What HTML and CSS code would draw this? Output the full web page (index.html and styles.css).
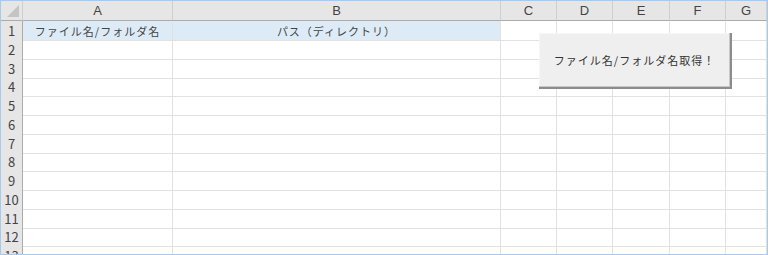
FILE: index.html
```html
<!DOCTYPE html>
<html lang="ja">
<head>
    <meta charset="UTF-8">
    <title>ファイル名/フォルダ名取得</title>
    <link rel="stylesheet" href="styles.css">
</head>
<body>
    <div class="sheet">
        <div class="grid">
            <div class="row head-row">
                <div class="corner"><span class="corner-mark"></span></div>
                <div class="col-head">A</div><div class="col-head">B</div><div class="col-head">C</div>
                <div class="col-head">D</div><div class="col-head">E</div><div class="col-head">F</div><div class="col-head">G</div>
            </div>
            <div class="row">
                <div class="row-head">1</div>
                <div class="cell title">ファイル名/フォルダ名</div><div class="cell title">パス（ディレクトリ）</div>
                <div class="cell"></div><div class="cell"></div><div class="cell"></div><div class="cell"></div><div class="cell"></div>
            </div>
            <div class="row"><div class="row-head">2</div><div class="cell"></div><div class="cell"></div><div class="cell"></div><div class="cell"></div><div class="cell"></div><div class="cell"></div><div class="cell"></div></div>
            <div class="row"><div class="row-head">3</div><div class="cell"></div><div class="cell"></div><div class="cell"></div><div class="cell"></div><div class="cell"></div><div class="cell"></div><div class="cell"></div></div>
            <div class="row"><div class="row-head">4</div><div class="cell"></div><div class="cell"></div><div class="cell"></div><div class="cell"></div><div class="cell"></div><div class="cell"></div><div class="cell"></div></div>
            <div class="row"><div class="row-head">5</div><div class="cell"></div><div class="cell"></div><div class="cell"></div><div class="cell"></div><div class="cell"></div><div class="cell"></div><div class="cell"></div></div>
            <div class="row"><div class="row-head">6</div><div class="cell"></div><div class="cell"></div><div class="cell"></div><div class="cell"></div><div class="cell"></div><div class="cell"></div><div class="cell"></div></div>
            <div class="row"><div class="row-head">7</div><div class="cell"></div><div class="cell"></div><div class="cell"></div><div class="cell"></div><div class="cell"></div><div class="cell"></div><div class="cell"></div></div>
            <div class="row"><div class="row-head">8</div><div class="cell"></div><div class="cell"></div><div class="cell"></div><div class="cell"></div><div class="cell"></div><div class="cell"></div><div class="cell"></div></div>
            <div class="row"><div class="row-head">9</div><div class="cell"></div><div class="cell"></div><div class="cell"></div><div class="cell"></div><div class="cell"></div><div class="cell"></div><div class="cell"></div></div>
            <div class="row"><div class="row-head">10</div><div class="cell"></div><div class="cell"></div><div class="cell"></div><div class="cell"></div><div class="cell"></div><div class="cell"></div><div class="cell"></div></div>
            <div class="row"><div class="row-head">11</div><div class="cell"></div><div class="cell"></div><div class="cell"></div><div class="cell"></div><div class="cell"></div><div class="cell"></div><div class="cell"></div></div>
            <div class="row"><div class="row-head">12</div><div class="cell"></div><div class="cell"></div><div class="cell"></div><div class="cell"></div><div class="cell"></div><div class="cell"></div><div class="cell"></div></div>
            <div class="row"><div class="row-head">13</div><div class="cell"></div><div class="cell"></div><div class="cell"></div><div class="cell"></div><div class="cell"></div><div class="cell"></div><div class="cell"></div></div>
        </div>

        <!-- ボタン (シートの上に乗っている) -->
        <button class="macro-btn">ファイル名/フォルダ名取得！</button>
    </div>
</body>
</html>
```

FILE: styles.css
```css
:root {
    --grid-line: #e1e1e1;
    --head-bg: #e6e6e6;
    --head-line: #cfcfcf;
    --frame: #a9c9ea;
}

* {
    margin: 0;
    padding: 0;
    box-sizing: border-box;
}

body {
    background: #fff;
    font-family: "Noto Sans CJK JP", "Noto Sans", sans-serif;
}

.sheet {
    position: relative;
    width: 768px;
    height: 255px;
    border: 1px solid var(--frame);
    overflow: hidden;
}

.row {
    display: grid;
    grid-template-columns: 22px 150px 328px 56px 56px 57px 56px 1fr;
    height: 18.75px;
}

.head-row {
    height: 20px;
}

.corner,
.col-head,
.row-head {
    background: var(--head-bg);
    color: #444;
    display: flex;
    align-items: center;
    justify-content: center;
}

.corner {
    position: relative;
    border-right: 1px solid var(--head-line);
    border-bottom: 1px solid #ababab;
}

.corner-mark {
    position: absolute;
    right: 3px;
    bottom: 3px;
    width: 0;
    height: 0;
    border-left: 12px solid transparent;
    border-bottom: 12px solid #c4c4c4;
}

.col-head {
    font-family: "Liberation Sans", Arial, sans-serif;
    font-size: 13px;
    border-right: 1px solid var(--head-line);
    border-bottom: 1px solid #ababab;
}

.row-head {
    font-size: 13px;
    border-right: 1px solid #ababab;
    border-bottom: 1px solid var(--head-line);
}

.cell {
    border-right: 1px solid var(--grid-line);
    border-bottom: 1px solid var(--grid-line);
    display: flex;
    align-items: center;
    justify-content: center;
    font-size: 11px;
    color: #444;
    letter-spacing: 1px;
    white-space: nowrap;
}

.cell.title {
    background: #ddebf7;
}

.macro-btn {
    position: absolute;
    left: 538px;
    top: 32px;
    width: 193px;
    height: 56px;
    background: #efefef;
    border: none;
    border-right: 2px solid #8c8c8c;
    border-bottom: 2px solid #8c8c8c;
    box-shadow: inset -1px -1px 0 #c8c8c8, inset 1px 1px 0 #f7f7f7;
    font-family: "Noto Sans CJK JP", sans-serif;
    font-size: 11px;
    color: #333;
    letter-spacing: 1px;
}
```
